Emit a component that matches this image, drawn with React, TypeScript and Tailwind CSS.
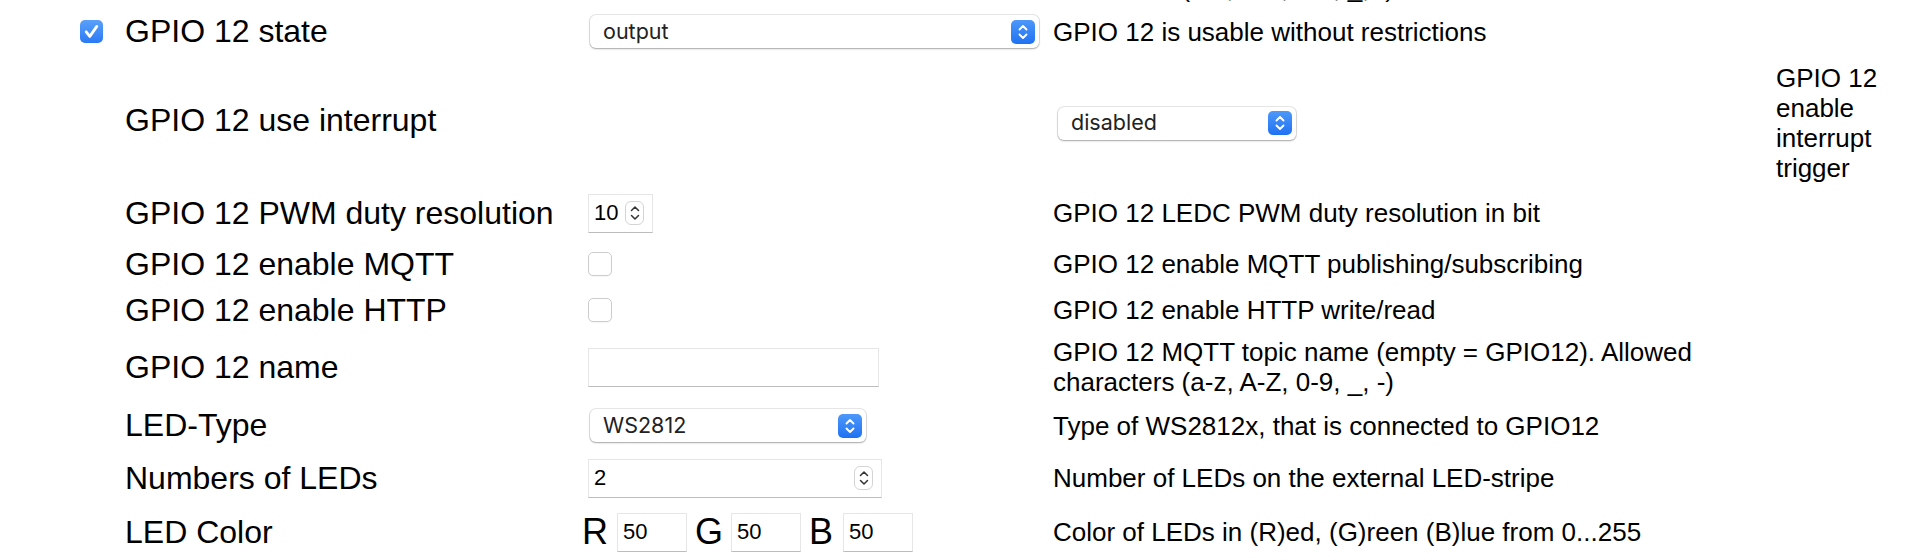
import React from 'react'

const sans = "font-['Liberation_Sans',Arial,sans-serif]"

function Chevrons({ color, weight }: { color: string; weight: number }) {
  return (
    <svg width="10" height="18" viewBox="0 0 10 18" fill="none">
      <path d="M1.5 6.5 L5 3 L8.5 6.5" stroke={color} strokeWidth={weight} strokeLinecap="round" strokeLinejoin="round" />
      <path d="M1.5 11.5 L5 15 L8.5 11.5" stroke={color} strokeWidth={weight} strokeLinecap="round" strokeLinejoin="round" />
    </svg>
  )
}

function Select({ value, className = '' }: { value: string; className?: string }) {
  return (
    <div
      className={`flex h-[33px] items-center justify-between rounded-[6px] bg-white pl-[13px] pr-[4px] shadow-[0_0_0_1px_rgba(0,0,0,0.09),0_1px_2px_rgba(0,0,0,0.28)] ${className}`}
    >
      <span className="font-['Inter',sans-serif] text-[21.5px] leading-none text-[#222]">{value}</span>
      <div className="flex h-[24px] w-[24px] items-center justify-center rounded-[5px] bg-gradient-to-b from-[#4d98f9] to-[#1f71f2]">
        <Chevrons color="#fff" weight={1.9} />
      </div>
    </div>
  )
}

function Spinner() {
  return (
    <div className="flex h-[24px] w-[19px] items-center justify-center rounded-[6px] border border-[#d4d4d4] bg-white">
      <Chevrons color="#333" weight={1.5} />
    </div>
  )
}

function Field({ value = '', className = '', spinner = false }: { value?: string; className?: string; spinner?: boolean }) {
  return (
    <div
      className={`flex h-[39px] items-center justify-between border border-[#e6e6e6] border-b-[#bdbdbd] bg-white pl-[5px] pr-[8px] ${className}`}
    >
      <span className={`${sans} text-[22px] leading-none text-black`}>{value}</span>
      {spinner && <Spinner />}
    </div>
  )
}

function Checkbox({ checked = false }: { checked?: boolean }) {
  if (checked) {
    return (
      <div className="flex h-[23px] w-[23px] items-center justify-center rounded-[5px] bg-gradient-to-b from-[#5aa0f9] to-[#2a79f5]">
        <svg width="23" height="23" viewBox="0 0 23 23" fill="none">
          <path d="M6.2 11.8 L9.8 16.4 L16.8 6.4" stroke="#fff" strokeWidth="2.8" strokeLinecap="round" strokeLinejoin="round" />
        </svg>
      </div>
    )
  }
  return <div className="h-[24px] w-[24px] rounded-[5px] border border-[#cdcdcd] bg-white shadow-[0_1px_1px_rgba(0,0,0,0.04)]" />
}

type Row = {
  h: string
  check?: React.ReactNode
  label?: string
  labelClass?: string
  input?: React.ReactNode
  desc?: React.ReactNode
  extra?: React.ReactNode
}

const rows: Row[] = [
  {
    h: 'h-[63px]',
    check: <Checkbox checked />,
    label: 'GPIO 12 state',
    input: <Select value="output" className="ml-[2px] w-[449px]" />,
    desc: 'GPIO 12 is usable without restrictions',
  },
  {
    h: 'h-[118px]',
    label: 'GPIO 12 use interrupt',
    labelClass: 'pb-[5px]',
    desc: <Select value="disabled" className="ml-[5px] w-[238px]" />,
    extra: 'GPIO 12 enable interrupt trigger',
  },
  {
    h: 'h-[64px]',
    label: 'GPIO 12 PWM duty resolution',
    input: <Field value="10" spinner className="w-[65px]" />,
    desc: 'GPIO 12 LEDC PWM duty resolution in bit',
  },
  {
    h: 'h-[38px]',
    label: 'GPIO 12 enable MQTT',
    input: <Checkbox />,
    desc: 'GPIO 12 enable MQTT publishing/subscribing',
  },
  {
    h: 'h-[54px]',
    label: 'GPIO 12 enable HTTP',
    input: <Checkbox />,
    desc: 'GPIO 12 enable HTTP write/read',
  },
  {
    h: 'h-[58px]',
    label: 'GPIO 12 name',
    input: <Field className="w-[291px]" />,
    desc: (
      <>
        GPIO 12 MQTT topic name (empty = GPIO12). Allowed
        <br />
        characters (a-z, A-Z, 0-9, _, -)
      </>
    ),
  },
  {
    h: 'h-[61px]',
    label: 'LED-Type',
    input: <Select value="WS2812" className="ml-[2px] w-[276px]" />,
    desc: 'Type of WS2812x, that is connected to GPIO12',
  },
  {
    h: 'h-[44px]',
    label: 'Numbers of LEDs',
    input: <Field value="2" spinner className="w-[294px]" />,
    desc: 'Number of LEDs on the external LED-stripe',
  },
  {
    h: 'h-[64px]',
    label: 'LED Color',
    input: (
      <div className="-ml-[6px] flex items-center">
        <span className={`${sans} text-[36px] leading-none`}>R</span>
        <Field value="50" className="ml-[9px] w-[70px]" />
        <span className={`${sans} ml-[8px] text-[36px] leading-none`}>G</span>
        <Field value="50" className="ml-[8px] w-[70px]" />
        <span className={`${sans} ml-[8px] text-[36px] leading-none`}>B</span>
        <Field value="50" className="ml-[10px] w-[70px]" />
      </div>
    ),
    desc: 'Color of LEDs in (R)ed, (G)reen (B)lue from 0...255',
  },
]

const grid = 'grid grid-cols-[45px_463px_465px_723px_134px] items-center'

export default function App() {
  return (
    <div className={`${sans} h-[560px] w-[1910px] overflow-hidden bg-white pl-[80px] text-black`}>
      {/* tail of the previous row, only its descenders show */}
      <div className={`${grid} -mt-[27px] h-[27px]`}>
        <div />
        <div />
        <div />
        <div className="text-[26px] leading-[30px]">characters (a-z, A-Z, 0-9, _, -)</div>
        <div />
      </div>
      {rows.map((r, i) => (
        <div key={i} className={`${grid} ${r.h}`}>
          <div className="flex items-center">{r.check}</div>
          <div className={`text-[32px] leading-[37px] ${r.labelClass ?? ''}`}>{r.label}</div>
          <div className="flex items-center">{r.input}</div>
          <div className="text-[26px] leading-[30px]">{r.desc}</div>
          <div className="text-[26px] leading-[30px]">{r.extra}</div>
        </div>
      ))}
    </div>
  )
}
